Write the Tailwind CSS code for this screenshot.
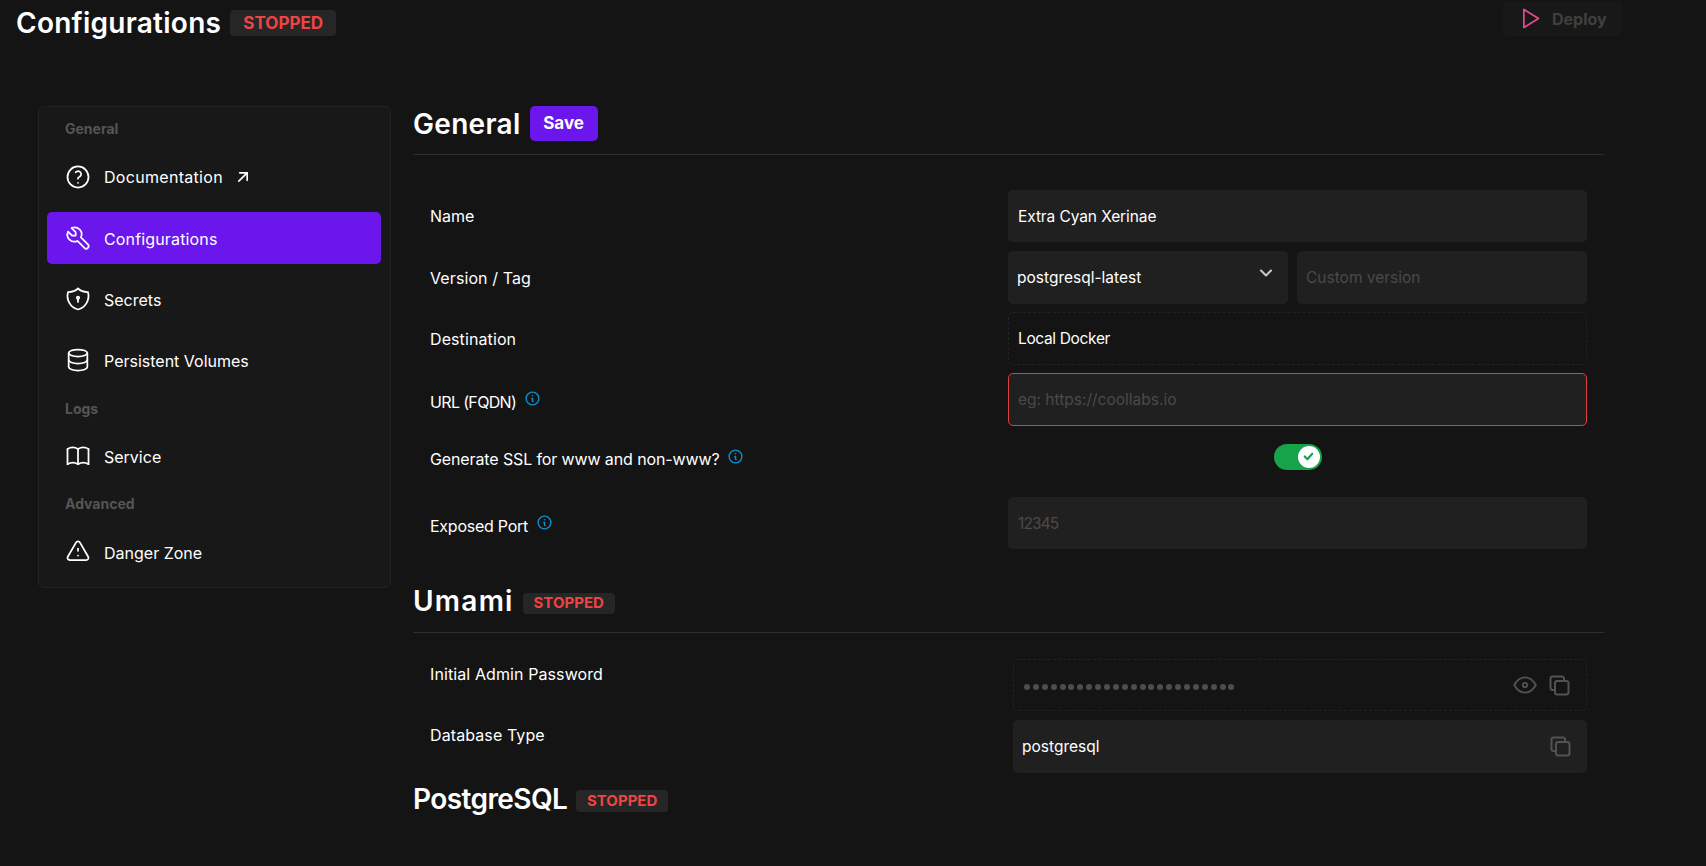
<!DOCTYPE html>
<html lang="en">
<head>
<meta charset="utf-8">
<title>Configurations</title>
<script src="https://cdn.jsdelivr.net/npm/@tailwindcss/browser@4"></script>
</head>
<body class="bg-[#141414]">
<div class="h-[866px] w-[1706px] overflow-hidden bg-[#141414] font-['Inter','Noto_Sans',sans-serif] text-white">
  <header class="flex h-[106px] items-start justify-between pl-4 pr-[84px]">
    <div class="flex h-[46px] items-center">
      <h1 class="text-[28px] font-semibold tracking-[0.26px]">Configurations</h1>
      <span class="ml-[9px] flex h-[26px] w-[106px] items-center justify-center rounded-[4px] bg-[#262626] pt-[1px] text-[17px] font-bold text-[#ef4444]">STOPPED</span>
    </div>
    <button class="mt-[2px] flex h-[34px] w-[119px] items-center rounded-[4px] bg-[#181818] pl-[13px] text-[16px] font-bold text-[#404040]">
      <svg class="-mt-[1px] h-[27px] w-[27px]" viewBox="0 0 24 24" fill="none" stroke="#ec4899" stroke-width="1.5" stroke-linecap="round" stroke-linejoin="round"><path d="M7 4v16l13 -8z"/></svg>
      <span class="-mt-[1px] ml-[9px]">Deploy</span>
    </button>
  </header>

  <div class="flex pl-[38px]">
    <nav class="flex h-[482px] w-[353px] flex-col rounded-[6px] border border-[#222222] bg-[#181818] pl-2 pr-[9px] text-[16px]">
      <div class="my-[11px] flex h-[22px] items-center pb-[2px] pl-[18px] text-[14px] font-bold text-[#555555]">General</div>
      <a class="flex h-[52px] items-center gap-3 pl-[17px]">
        <svg class="h-7 w-7" viewBox="0 0 24 24" fill="none" stroke="currentColor" stroke-width="1.5" stroke-linecap="round" stroke-linejoin="round"><path d="M12 12m-9 0a9 9 0 1 0 18 0a9 9 0 1 0 -18 0"/><path d="M12 17l0 .01"/><path d="M12 13.5a1.5 1.5 0 0 1 1 -1.5a2.6 2.6 0 1 0 -3 -4"/></svg>
        <span class="tracking-[0.3px]">Documentation</span>
        <svg class="-ml-[2px] h-[20px] w-[20px]" viewBox="0 0 24 24" fill="none" stroke="currentColor" stroke-width="2" stroke-linecap="round" stroke-linejoin="round"><path d="M17 7l-10 10"/><path d="M8 7l9 0l0 9"/></svg>
      </a>
      <a class="mt-[9px] flex h-[52px] items-center gap-3 rounded-[5px] bg-[#6b16ed] pl-[17px]">
        <svg class="h-7 w-7" viewBox="0 0 24 24" fill="none" stroke="currentColor" stroke-width="1.5" stroke-linecap="round" stroke-linejoin="round"><path d="M7 10h3v-3l-3.5 -3.5a6 6 0 0 1 8 8l6 6a2 2 0 0 1 -3 3l-6 -6a6 6 0 0 1 -8 -8l3.5 3.5"/></svg>
        <span class="mt-[1px] tracking-[0.15px]">Configurations</span>
      </a>
      <a class="mt-[9px] flex h-[52px] items-center gap-3 pl-[17px]">
        <svg class="h-7 w-7" viewBox="0 0 24 24" fill="none" stroke="currentColor" stroke-width="1.5" stroke-linecap="round" stroke-linejoin="round"><path d="M12 3a12 12 0 0 0 8.5 3a12 12 0 0 1 -8.5 15a12 12 0 0 1 -8.5 -15a12 12 0 0 0 8.5 -3"/><path d="M12 11m-1 0a1 1 0 1 0 2 0a1 1 0 1 0 -2 0"/><path d="M12 12l0 2.5"/></svg>
        <span class="mt-[1px]">Secrets</span>
      </a>
      <a class="mt-[9px] flex h-[52px] items-center gap-3 pl-[17px]">
        <svg class="h-7 w-7" viewBox="0 0 24 24" fill="none" stroke="currentColor" stroke-width="1.5" stroke-linecap="round" stroke-linejoin="round"><path d="M12 6m-8 0a8 3 0 1 0 16 0a8 3 0 1 0 -16 0"/><path d="M4 6v6a8 3 0 0 0 16 0v-6"/><path d="M4 12v6a8 3 0 0 0 16 0v-6"/></svg>
        <span class="mt-[1px]">Persistent Volumes</span>
      </a>
      <div class="my-[11px] flex h-[22px] items-center pl-[18px] text-[14px] font-bold text-[#555555]">Logs</div>
      <a class="flex h-[52px] items-center gap-3 pl-[17px]">
        <svg class="h-7 w-7" viewBox="0 0 24 24" fill="none" stroke="currentColor" stroke-width="1.5" stroke-linecap="round" stroke-linejoin="round"><path d="M3 19a9 9 0 0 1 9 0a9 9 0 0 1 9 0"/><path d="M3 6a9 9 0 0 1 9 0a9 9 0 0 1 9 0"/><path d="M3 6l0 13"/><path d="M12 6l0 13"/><path d="M21 6l0 13"/></svg>
        <span class="mt-[1px]">Service</span>
      </a>
      <div class="my-[11px] flex h-[22px] items-center pb-[2px] pl-[18px] text-[14px] font-bold text-[#555555]">Advanced</div>
      <a class="flex h-[52px] items-center gap-3 pl-[17px]">
        <svg class="h-7 w-7" viewBox="0 0 24 24" fill="none" stroke="currentColor" stroke-width="1.5" stroke-linecap="round" stroke-linejoin="round"><path d="M12 9v2m0 4v.01"/><path d="M5 19h14a2 2 0 0 0 1.84 -2.75l-7.1 -12.25a2 2 0 0 0 -3.5 0l-7.1 12.25a2 2 0 0 0 1.75 2.75"/></svg>
        <span class="mt-[1px]">Danger Zone</span>
      </a>
    </nav>

    <main class="ml-[22px] w-[1191px] text-[16px]">
      <div class="flex h-[49px] items-start border-b border-[#2e2e2e]">
        <h2 class="flex h-[35px] items-center text-[28px] font-semibold tracking-[0.3px]">General</h2>
        <button class="ml-[9px] h-[35px] w-[68px] rounded-[5px] bg-[#6b16ed] text-[17px] font-bold">Save</button>
      </div>

      <div class="mt-[35px] flex flex-col px-[17px]">
        <div class="grid h-[52px] grid-cols-[578px_579px] items-center">
          <label>Name</label>
          <input readonly value="Extra Cyan Xerinae" class="h-full w-full rounded-[5px] bg-[#202020] px-[10px] text-[15.5px] tracking-[-0.1px] outline-none">
        </div>
        <div class="mt-[9px] grid h-[53px] grid-cols-[578px_579px] items-center">
          <label class="tracking-[0.1px]">Version / Tag</label>
          <div class="flex h-full gap-[9px]">
            <div class="relative flex h-full w-[280px] items-center rounded-[5px] bg-[#202020] pl-[9px] text-[15.5px]">
              <span>postgresql-latest</span>
              <svg class="absolute right-[12px] top-[12px] h-[20px] w-[20px] text-[#c8c8c8]" viewBox="0 0 24 24" fill="none" stroke="currentColor" stroke-width="2.5" stroke-linecap="round" stroke-linejoin="round"><path d="M6 9l6 6l6 -6"/></svg>
            </div>
            <input readonly placeholder="Custom version" class="h-full min-w-0 flex-1 rounded-[5px] bg-[#202020] px-[9px] text-[15.5px] outline-none placeholder:text-[#4a4a4a]">
          </div>
        </div>
        <div class="mt-[8px] grid h-[53px] grid-cols-[578px_579px] items-center">
          <label class="tracking-[0.1px]">Destination</label>
          <input readonly value="Local Docker" class="h-full w-full rounded-[5px] border border-dashed border-[#222222] px-[9px] text-[15.5px] tracking-[-0.35px] outline-none">
        </div>
        <div class="mt-[8px] grid h-[53px] grid-cols-[578px_579px] items-center">
          <label class="mt-[5px] flex items-center tracking-[-0.65px]">URL (FQDN)
            <svg class="-mt-[7px] ml-[8px] h-[17px] w-[17px] text-[#0891d1]" viewBox="0 0 24 24" fill="none" stroke="currentColor" stroke-width="2" stroke-linecap="round" stroke-linejoin="round"><path d="M12 12m-9 0a9 9 0 1 0 18 0a9 9 0 1 0 -18 0"/><path d="M12 8l.01 0"/><path d="M11 12l1 0l0 4l1 0"/></svg>
          </label>
          <input readonly placeholder="eg: https://coollabs.io" class="h-full w-full rounded-[5px] border border-[#dc3f3f] bg-[#202020] px-[9px] text-[15.5px] outline-none placeholder:text-[#4a4a4a]">
        </div>
        <div class="mt-[16px] grid h-[26px] grid-cols-[578px_579px] items-center">
          <label class="mt-[5px] flex items-center whitespace-nowrap tracking-[-0.12px]">Generate SSL for www and non-www?
            <svg class="-mt-[6px] ml-[7px] h-[17px] w-[17px] text-[#0891d1]" viewBox="0 0 24 24" fill="none" stroke="currentColor" stroke-width="2" stroke-linecap="round" stroke-linejoin="round"><path d="M12 12m-9 0a9 9 0 1 0 18 0a9 9 0 1 0 -18 0"/><path d="M12 8l.01 0"/><path d="M11 12l1 0l0 4l1 0"/></svg>
          </label>
          <div class="flex justify-center">
            <div class="flex h-[26px] w-[48px] items-center justify-end rounded-full bg-[#16a34a] pr-[2px]">
              <div class="flex h-[22px] w-[22px] items-center justify-center rounded-full bg-white">
                <svg class="h-[13px] w-[13px]" viewBox="0 0 24 24" fill="none" stroke="#16a34a" stroke-width="4" stroke-linecap="round" stroke-linejoin="round"><path d="M5 12l5 5l9 -10"/></svg>
              </div>
            </div>
          </div>
        </div>
        <div class="mt-[29px] grid h-[52px] grid-cols-[578px_579px] items-center">
          <label class="mt-[5px] flex items-center tracking-[-0.25px]">Exposed Port
            <svg class="-mt-[7px] ml-[8px] h-[17px] w-[17px] text-[#0891d1]" viewBox="0 0 24 24" fill="none" stroke="currentColor" stroke-width="2" stroke-linecap="round" stroke-linejoin="round"><path d="M12 12m-9 0a9 9 0 1 0 18 0a9 9 0 1 0 -18 0"/><path d="M12 8l.01 0"/><path d="M11 12l1 0l0 4l1 0"/></svg>
          </label>
          <input readonly placeholder="12345" class="h-full w-full rounded-[5px] bg-[#202020] px-[10px] text-[15.5px] tracking-[-0.9px] outline-none placeholder:text-[#4a4a4a]">
        </div>
      </div>

      <div class="mt-[29px] border-b border-[#2e2e2e] pb-[10px]">
        <div class="flex h-[44px] items-center">
          <h2 class="mt-[1px] text-[28px] font-semibold tracking-[1.25px]">Umami</h2>
          <span class="ml-[9px] mt-[7px] flex h-[21px] w-[92px] items-center justify-center rounded-[4px] bg-[#262626] text-[15px] font-bold text-[#ef4444]">STOPPED</span>
        </div>
      </div>

      <div class="mt-[26px] flex flex-col px-[17px]">
        <div class="grid h-[52px] grid-cols-[583px_574px]">
          <label class="pt-[3px] tracking-[0.1px]">Initial Admin Password</label>
          <div class="flex h-full items-center rounded-[5px] border border-dashed border-[#222222] pl-[10px] pr-[13px]">
            <div class="mt-[4px] flex gap-[2.9px]">
              <i class="h-[6px] w-[6px] rounded-full bg-[#4d4d4d]"></i><i class="h-[6px] w-[6px] rounded-full bg-[#4d4d4d]"></i><i class="h-[6px] w-[6px] rounded-full bg-[#4d4d4d]"></i><i class="h-[6px] w-[6px] rounded-full bg-[#4d4d4d]"></i><i class="h-[6px] w-[6px] rounded-full bg-[#4d4d4d]"></i><i class="h-[6px] w-[6px] rounded-full bg-[#4d4d4d]"></i><i class="h-[6px] w-[6px] rounded-full bg-[#4d4d4d]"></i><i class="h-[6px] w-[6px] rounded-full bg-[#4d4d4d]"></i><i class="h-[6px] w-[6px] rounded-full bg-[#4d4d4d]"></i><i class="h-[6px] w-[6px] rounded-full bg-[#4d4d4d]"></i><i class="h-[6px] w-[6px] rounded-full bg-[#4d4d4d]"></i><i class="h-[6px] w-[6px] rounded-full bg-[#4d4d4d]"></i><i class="h-[6px] w-[6px] rounded-full bg-[#4d4d4d]"></i><i class="h-[6px] w-[6px] rounded-full bg-[#4d4d4d]"></i><i class="h-[6px] w-[6px] rounded-full bg-[#4d4d4d]"></i><i class="h-[6px] w-[6px] rounded-full bg-[#4d4d4d]"></i><i class="h-[6px] w-[6px] rounded-full bg-[#4d4d4d]"></i><i class="h-[6px] w-[6px] rounded-full bg-[#4d4d4d]"></i><i class="h-[6px] w-[6px] rounded-full bg-[#4d4d4d]"></i><i class="h-[6px] w-[6px] rounded-full bg-[#4d4d4d]"></i><i class="h-[6px] w-[6px] rounded-full bg-[#4d4d4d]"></i><i class="h-[6px] w-[6px] rounded-full bg-[#4d4d4d]"></i><i class="h-[6px] w-[6px] rounded-full bg-[#4d4d4d]"></i><i class="h-[6px] w-[6px] rounded-full bg-[#4d4d4d]"></i>
            </div>
            <svg class="ml-auto h-[26px] w-[26px] text-[#525252]" viewBox="0 0 24 24" fill="none" stroke="currentColor" stroke-width="1.75" stroke-linecap="round" stroke-linejoin="round"><path d="M12 12m-2 0a2 2 0 1 0 4 0a2 2 0 1 0 -4 0"/><path d="M22 12c-2.667 4.667 -6 7 -10 7s-7.333 -2.333 -10 -7c2.667 -4.667 6 -7 10 -7s7.333 2.333 10 7"/></svg>
            <svg class="ml-[8px] h-[27px] w-[27px] text-[#525252]" viewBox="0 0 24 24" fill="none" stroke="currentColor" stroke-width="1.75" stroke-linecap="round" stroke-linejoin="round"><path d="M8 8m0 2a2 2 0 0 1 2 -2h8a2 2 0 0 1 2 2v8a2 2 0 0 1 -2 2h-8a2 2 0 0 1 -2 -2z"/><path d="M16 8v-2a2 2 0 0 0 -2 -2h-8a2 2 0 0 0 -2 2v8a2 2 0 0 0 2 2h2"/></svg>
          </div>
        </div>
        <div class="mt-[9px] grid h-[53px] grid-cols-[583px_574px]">
          <label class="pt-[3px] tracking-[0.1px]">Database Type</label>
          <div class="flex h-full items-center rounded-[5px] bg-[#202020] pl-[9px] pr-[13px] text-[15.5px]">
            <span>postgresql</span>
            <svg class="ml-auto h-[27px] w-[27px] text-[#525252]" viewBox="0 0 24 24" fill="none" stroke="currentColor" stroke-width="1.75" stroke-linecap="round" stroke-linejoin="round"><path d="M8 8m0 2a2 2 0 0 1 2 -2h8a2 2 0 0 1 2 2v8a2 2 0 0 1 -2 2h-8a2 2 0 0 1 -2 -2z"/><path d="M16 8v-2a2 2 0 0 0 -2 -2h-8a2 2 0 0 0 -2 2v8a2 2 0 0 0 2 2h2"/></svg>
          </div>
        </div>
      </div>

      <div class="mt-[4px] flex h-[44px] items-center">
        <h2 class="text-[28px] font-semibold tracking-[-0.6px]">PostgreSQL</h2>
        <span class="ml-[9px] mt-[4px] flex h-[22px] w-[92px] items-center justify-center rounded-[4px] bg-[#262626] text-[15px] font-bold text-[#ef4444]">STOPPED</span>
      </div>
    </main>
  </div>
</div>
</body>
</html>
